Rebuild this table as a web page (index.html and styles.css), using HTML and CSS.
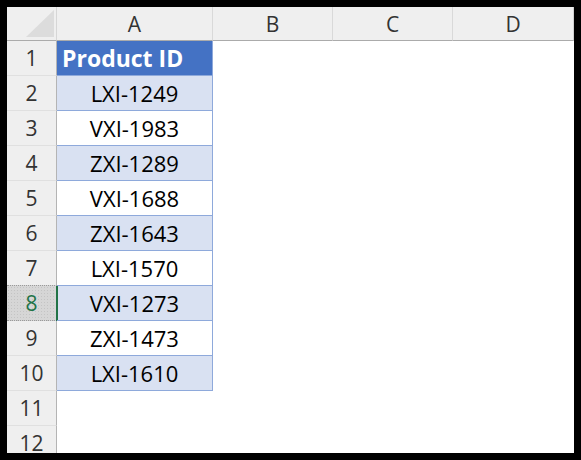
FILE: index.html
```html
<!DOCTYPE html>
<html>
<head>
<meta charset="utf-8">
<link rel="stylesheet" href="styles.css">
</head>
<body>
<div class="frame">
  <div class="sheet">
    <div class="corner"><svg class="tri" width="28" height="27" viewBox="0 0 28 27"><polygon points="0,27 28,27 28,0" fill="#dcdcdc"/></svg></div>
    <div class="colh">A</div>
    <div class="colh">B</div>
    <div class="colh">C</div>
    <div class="colh last">D</div>

    <div class="rowh">1</div><div class="cell title">Product ID</div><div class="cell"></div><div class="cell"></div><div class="cell"></div>
    <div class="rowh">2</div><div class="cell data alt">LXI-1249</div><div class="cell"></div><div class="cell"></div><div class="cell"></div>
    <div class="rowh">3</div><div class="cell data">VXI-1983</div><div class="cell"></div><div class="cell"></div><div class="cell"></div>
    <div class="rowh">4</div><div class="cell data alt">ZXI-1289</div><div class="cell"></div><div class="cell"></div><div class="cell"></div>
    <div class="rowh">5</div><div class="cell data">VXI-1688</div><div class="cell"></div><div class="cell"></div><div class="cell"></div>
    <div class="rowh">6</div><div class="cell data alt">ZXI-1643</div><div class="cell"></div><div class="cell"></div><div class="cell"></div>
    <div class="rowh">7</div><div class="cell data">LXI-1570</div><div class="cell"></div><div class="cell"></div><div class="cell"></div>
    <div class="rowh sel">8</div><div class="cell data alt active">VXI-1273</div><div class="cell"></div><div class="cell"></div><div class="cell"></div>
    <div class="rowh">9</div><div class="cell data">ZXI-1473</div><div class="cell"></div><div class="cell"></div><div class="cell"></div>
    <div class="rowh">10</div><div class="cell data alt">LXI-1610</div><div class="cell"></div><div class="cell"></div><div class="cell"></div>
    <div class="rowh">11</div><div class="cell"></div><div class="cell"></div><div class="cell"></div><div class="cell"></div>
    <div class="rowh">12</div><div class="cell"></div><div class="cell"></div><div class="cell"></div><div class="cell"></div>
  </div>
</div>
</body>
</html>
```

FILE: styles.css
```css
html, body {
  margin: 0;
  padding: 0;
  background: #000;
}
.frame {
  width: 581px;
  height: 460px;
  padding: 7px;
  box-sizing: border-box;
}
.sheet {
  width: 567px;
  height: 446px;
  overflow: hidden;
  background: #fff;
  display: grid;
  grid-template-columns: 50px 156px 120px 120px 121px;
  grid-template-rows: 34px repeat(12, 35px);
  font-family: "Open Sans", "Noto Sans", sans-serif;
  font-size: 22px;
  color: #000;
}
.corner {
  background: #efefef;
  border-right: 1px solid #d6d6d6;
  border-bottom: 1px solid #ababab;
  display: flex;
  justify-content: flex-end;
  align-items: flex-end;
  padding: 0 2px 3px 0;
  box-sizing: border-box;
}
.colh {
  background: #efefef;
  color: #333;
  border-right: 1px solid #d9d9d9;
  border-bottom: 1px solid #ababab;
  display: flex;
  align-items: center;
  justify-content: center;
  font-size: 21px;
  box-sizing: border-box;
}
.colh.last {
  border-right: 1px solid #d0d0d0;
}
.rowh {
  background: #efefef;
  color: #333;
  border-right: 1px solid #b4b4b4;
  border-bottom: 1px solid #e0e0e0;
  display: flex;
  align-items: center;
  justify-content: center;
  font-size: 21px;
  box-sizing: border-box;
}
.rowh.sel {
  background-color: #d6d6d6;
  background-image: radial-gradient(#c4c4c4 0.6px, transparent 0.8px);
  background-size: 3px 3px;
  color: #217346;
  border-top: 1px dotted #9a9a9a;
  border-bottom: 1px dotted #9a9a9a;
  margin-top: -1px;
}
.cell {
  box-sizing: border-box;
}
.title {
  background: #4472c4;
  color: #fff;
  font-weight: 700;
  display: flex;
  align-items: center;
  padding-left: 5px;
  font-size: 23px;
  border-right: 1px solid #8ea9db;
  border-bottom: 1px solid #8ea9db;
}
.data {
  display: flex;
  align-items: center;
  justify-content: center;
  border-right: 1px solid #8ea9db;
  border-bottom: 1px solid #8ea9db;
  background: #fff;
}
.data.alt {
  background: #d9e1f2;
}
.active {
  box-shadow: inset 1px 0 0 #217346, -1px 0 0 #217346;
}
```
